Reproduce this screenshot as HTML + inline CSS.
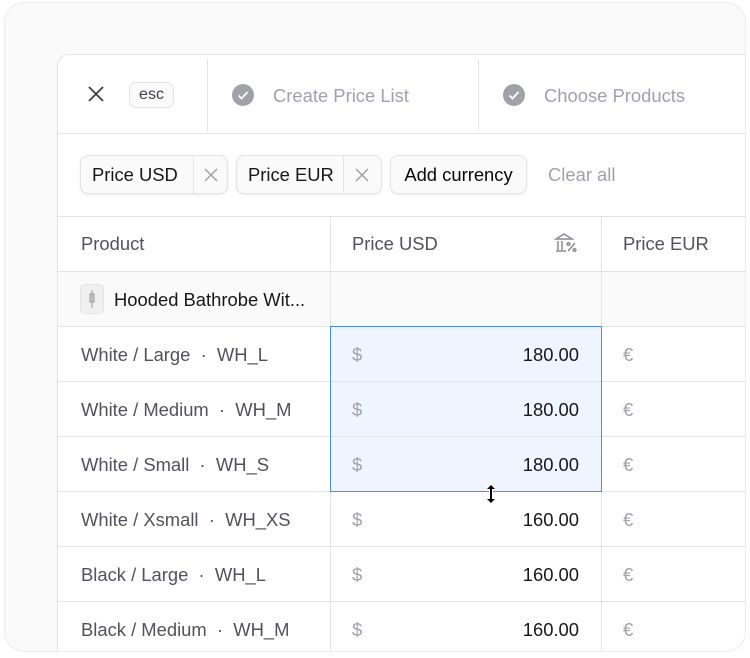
<!DOCTYPE html>
<html><head><style>
*{box-sizing:border-box;margin:0;padding:0}
body{width:750px;height:658px;background:#fff;font-family:"Liberation Sans",sans-serif;position:relative;overflow:hidden;color:#18181b}
.outer{position:absolute;left:4px;top:2px;width:742px;height:650px;background:#fafafa;border:1px solid #ececec;border-radius:20px;overflow:hidden}
.panel{position:absolute;left:52px;top:51px;width:720px;height:620px;background:#fff;border:1px solid #e4e4e7;border-radius:12px 0 0 0;overflow:hidden}
.in{position:absolute;left:-3px;top:0;width:730px;height:620px}
.a{position:absolute}
.hl{position:absolute;left:0;right:0;height:1px;background:#e4e4e7}
.vl{position:absolute;width:1px;background:#e4e4e7}
.t{position:absolute;font-size:18.4px;line-height:20px;white-space:nowrap}
.g{color:#a1a1aa}
.m{color:#52525b}
.chip{position:absolute;top:100px;height:39px;border:1px solid #e4e4e7;border-radius:8px;background:#fafafa;box-shadow:0 1px 2px rgba(0,0,0,.08);font-size:18.4px;line-height:37px}
</style></head><body>
<div class="outer">
<div class="panel"><div class="in">
 <svg class="a" style="left:32px;top:30px" width="18" height="18" viewBox="0 0 18 18"><path d="M2 2L16 16M16 2L2 16" stroke="#3f3f46" stroke-width="1.8"/></svg>
 <div class="a" style="left:74px;top:27px;width:45px;height:26px;border:1px solid #e4e4e7;border-radius:7px;background:#fafafa;font-size:16px;line-height:24px;text-align:center;color:#3f3f46">esc</div>
 <div class="vl" style="left:152px;top:4px;height:72px"></div>
 <svg class="a" style="left:177px;top:29px" width="22" height="22" viewBox="0 0 22 22"><circle cx="11" cy="11" r="11" fill="#a1a1aa"/><path d="M6.5 11.5l3 3 6-6.5" stroke="#fff" stroke-width="1.8" fill="none"/></svg>
 <div class="t g" style="left:218px;top:31px">Create Price List</div>
 <div class="vl" style="left:423px;top:4px;height:72px"></div>
 <svg class="a" style="left:448px;top:29px" width="22" height="22" viewBox="0 0 22 22"><circle cx="11" cy="11" r="11" fill="#a1a1aa"/><path d="M6.5 11.5l3 3 6-6.5" stroke="#fff" stroke-width="1.8" fill="none"/></svg>
 <div class="t g" style="left:489px;top:31px">Choose Products</div>
 <div class="hl" style="top:78px"></div>
 <div class="chip" style="left:25px;width:148px"><span style="margin-left:11px">Price USD</span><span class="a" style="left:112px;top:0;height:37px;border-left:1px solid #e4e4e7;width:35px"></span><svg class="a" style="left:123px;top:12px" width="14" height="14"><path d="M1 1L13 13M13 1L1 13" stroke="#a1a1aa" stroke-width="1.5"/></svg></div>
 <div class="chip" style="left:181px;width:146px"><span style="margin-left:11px">Price EUR</span><span class="a" style="left:106px;top:0;height:37px;border-left:1px solid #e4e4e7;width:35px"></span><svg class="a" style="left:118px;top:12px" width="14" height="14"><path d="M1 1L13 13M13 1L1 13" stroke="#a1a1aa" stroke-width="1.5"/></svg></div>
 <div class="chip" style="left:335px;width:137px;text-align:center;color:#09090b">Add currency</div>
 <div class="t g" style="left:493px;top:110px">Clear all</div>
 <div class="hl" style="top:161px"></div>
 <div class="t m" style="left:26px;top:179px">Product</div>
 <div class="t m" style="left:297px;top:179px">Price USD</div>
 <svg class="a" style="left:499px;top:177px" width="24" height="22" viewBox="0 0 24 22" fill="none" stroke="#8a8a93" stroke-width="1.5"><path d="M2 7L10 2L18 7Z M4 9v9 M8 9v9 M2 19h10"/><path d="M14 19L21 11"/><circle cx="14.5" cy="12" r="1.3"/><circle cx="20.5" cy="18" r="1.3"/></svg>
 <div class="t m" style="left:568px;top:179px">Price EUR</div>
 <div class="hl" style="top:216px"></div>
 <div class="a" style="left:0;top:217px;width:730px;height:54px;background:#fafafa"></div>
 <div class="a" style="left:25px;top:229px;width:24px;height:30px;border:1px solid #e4e4e7;border-radius:5px;background:#f0f0f0"><svg width="22" height="28"><path d="M11 5v18M9 9h4v8h-4z" stroke="#999" stroke-width="1" fill="#ddd"/></svg></div>
 <div class="t" style="left:59px;top:235px">Hooded Bathrobe Wit...</div>
 <div class="hl" style="top:271px"></div>
 <div class="a" style="left:276px;top:272px;width:271px;height:165px;background:#eff5ff"></div>
 <div class="hl" style="top:326px"></div>
 <div class="hl" style="top:381px"></div>
 <div class="hl" style="top:436px"></div>
 <div class="hl" style="top:491px"></div>
 <div class="hl" style="top:546px"></div>
 <div class="hl" style="top:601px"></div>
 <div class="vl" style="left:275px;top:162px;height:460px"></div>
 <div class="vl" style="left:546px;top:162px;height:460px"></div>
 <div class="a" style="left:275px;top:271px;width:272px;height:166px;border:1.5px solid #4a8df0"></div>

 <div class="t m" style="left:26px;top:290px">White / Large &nbsp;·&nbsp; WH_L</div>
 <div class="t m" style="left:26px;top:345px">White / Medium &nbsp;·&nbsp; WH_M</div>
 <div class="t m" style="left:26px;top:400px">White / Small &nbsp;·&nbsp; WH_S</div>
 <div class="t m" style="left:26px;top:455px">White / Xsmall &nbsp;·&nbsp; WH_XS</div>
 <div class="t m" style="left:26px;top:510px">Black / Large &nbsp;·&nbsp; WH_L</div>
 <div class="t m" style="left:26px;top:565px">Black / Medium &nbsp;·&nbsp; WH_M</div>

 <div class="t g" style="left:297px;top:290px">$</div><div class="t" style="left:444px;width:80px;text-align:right;top:290px">180.00</div><div class="t g" style="left:568px;top:290px">€</div>
 <div class="t g" style="left:297px;top:345px">$</div><div class="t" style="left:444px;width:80px;text-align:right;top:345px">180.00</div><div class="t g" style="left:568px;top:345px">€</div>
 <div class="t g" style="left:297px;top:400px">$</div><div class="t" style="left:444px;width:80px;text-align:right;top:400px">180.00</div><div class="t g" style="left:568px;top:400px">€</div>
 <div class="t g" style="left:297px;top:455px">$</div><div class="t" style="left:444px;width:80px;text-align:right;top:455px">160.00</div><div class="t g" style="left:568px;top:455px">€</div>
 <div class="t g" style="left:297px;top:510px">$</div><div class="t" style="left:444px;width:80px;text-align:right;top:510px">160.00</div><div class="t g" style="left:568px;top:510px">€</div>
 <div class="t g" style="left:297px;top:565px">$</div><div class="t" style="left:444px;width:80px;text-align:right;top:565px">160.00</div><div class="t g" style="left:568px;top:565px">€</div>
 <svg class="a" style="left:429px;top:428px" width="14" height="22" viewBox="0 0 14 22"><path d="M7 2v18M3 6l4-4 4 4M3 16l4 4 4-4" stroke="#fff" stroke-width="4" fill="none"/><path d="M7 3v16" stroke="#000" stroke-width="2"/><path d="M3 6l4-4 4 4zM3 16l4 4 4-4z" fill="#000"/></svg>
</div></div>
</div>
</body></html>
